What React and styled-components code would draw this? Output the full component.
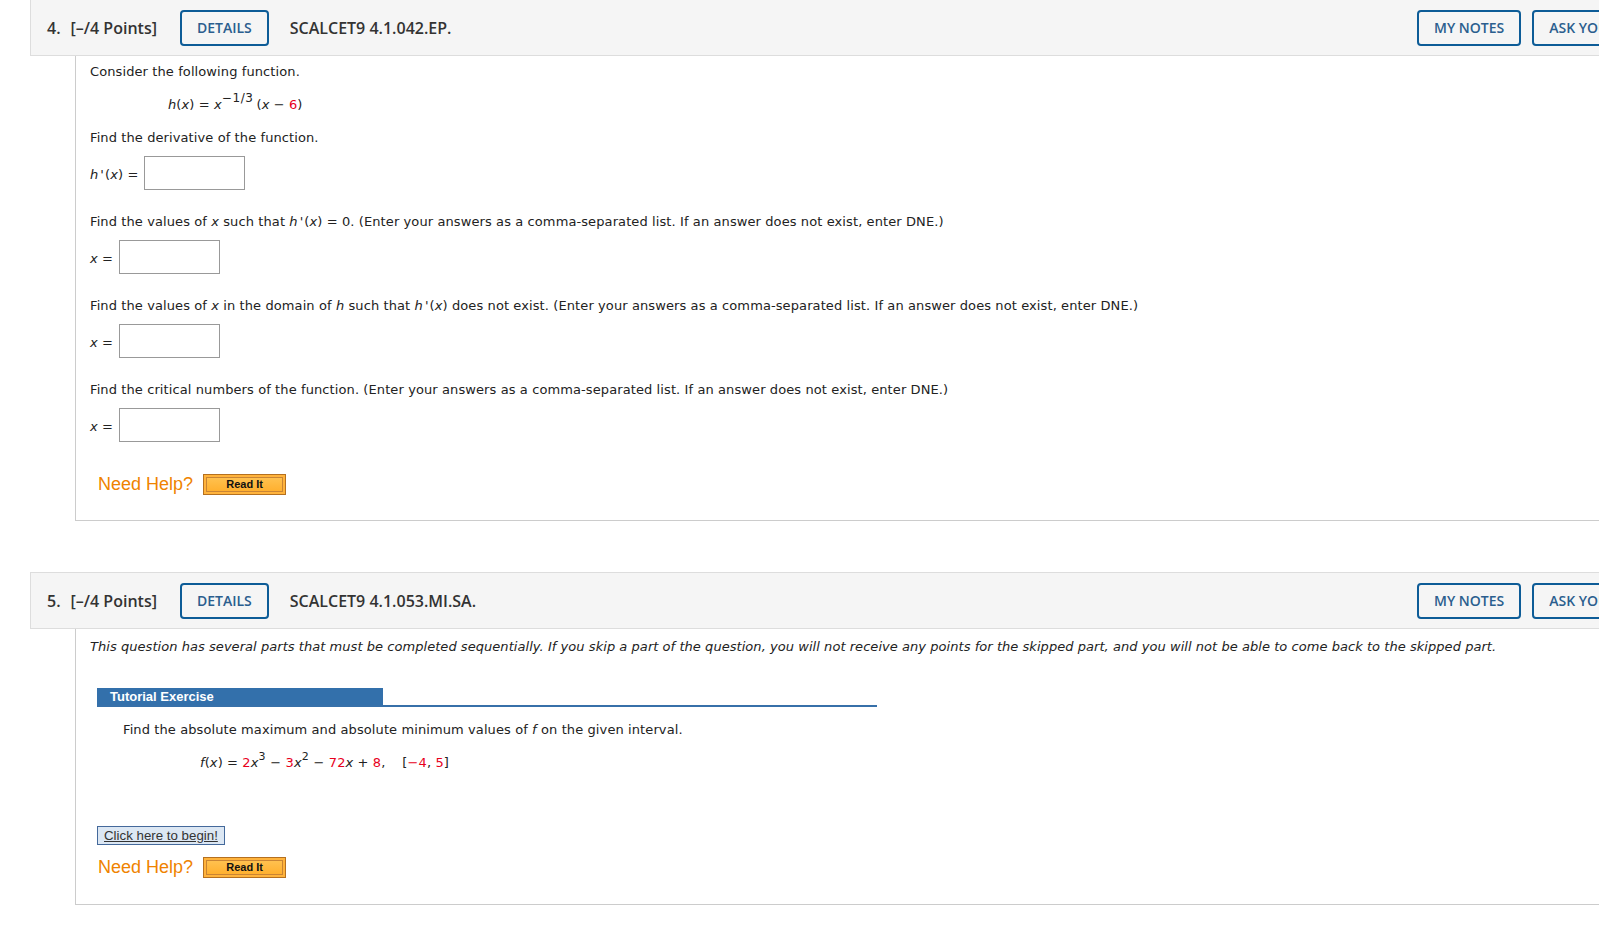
import React from 'react'
import styled, { createGlobalStyle } from 'styled-components'

const GlobalStyle = createGlobalStyle`
  html, body {
    margin: 0;
    padding: 0;
    background: #fff;
    overflow-x: hidden;
  }
  body {
    font-family: "DejaVu Sans", Verdana, sans-serif;
    font-size: 13px;
    letter-spacing: 0.1px;
    color: #222;
  }
`

const Page = styled.div`
  width: 1900px;
  padding-left: 30px;
`

const Question = styled.section`
  margin-top: ${p => p.first ? '-1px' : '51px'};
`

const Header = styled.header`
  display: flex;
  align-items: center;
  height: 55px;
  background: #f5f5f5;
  border: 1px solid #ddd;
  padding-left: 16px;
  font-family: "Open Sans", "Noto Sans", sans-serif;
  font-size: 16px;
  font-weight: 600;
  letter-spacing: 0;
  color: #333;
`

const LeftGroup = styled.div`
  display: flex;
  align-items: center;
  width: 1370px;
`

const Num = styled.span`
  margin-right: 10px;
`

const Points = styled.span`
  margin-right: 23px;
`

const OutlineButton = styled.button`
  height: 36px;
  padding: 0 ${p => p.pad || 14}px;
  background: #fff0;
  border: 2px solid #0d5c97;
  border-radius: 4px;
  font-family: "Open Sans", "Noto Sans", sans-serif;
  font-size: 14px;
  font-weight: 600;
  color: #2b5e8e;
  cursor: pointer;
  white-space: nowrap;
`

const Code = styled.span`
  margin-left: 21px;
`

const RightGroup = styled.div`
  display: flex;
  align-items: center;
  gap: 11px;
`

const Body = styled.div`
  margin-left: 45px;
  border-left: 1px solid #ccc;
  border-bottom: 1px solid #ccc;
  padding: 5px 0 ${p => p.pb || 24}px 14px;
`

const Text = styled.p`
  margin: ${p => p.mt || 0}px 0 0;
  line-height: 20px;
  font-style: ${p => p.italic ? 'italic' : 'normal'};
  letter-spacing: ${p => p.italic ? '0.05px' : '0.1px'};
  padding-left: ${p => p.indent || 0}px;
  white-space: nowrap;
`

const I = styled.i`
  font-style: italic;
`

const Prime = styled.span`
  padding: 0 1px 0 2px;
`

const Red = styled.span`
  color: #e8001c;
`

const Sup = styled.sup`
  font-size: ${p => p.size || 11}px;
  letter-spacing: 0.6px;
  line-height: 0;
  vertical-align: 7px;
  margin-right: ${p => p.mr || 0}px;
`

const AnswerRow = styled.div`
  display: flex;
  align-items: center;
  gap: 6px;
  margin-top: 8px;
  margin-bottom: 22px;
`

const Label = styled.span`
  line-height: 20px;
  padding-top: 4px;
`

const AnswerBox = styled.input`
  box-sizing: border-box;
  width: ${p => p.w || 101}px;
  height: 34px;
  border: 1px solid #999;
  background: #fff;
  outline: none;
`

const HelpRow = styled.div`
  display: flex;
  align-items: center;
  gap: 10px;
  height: 24px;
  margin-top: ${p => p.mt || 0}px;
  padding-left: 8px;
`

const NeedHelp = styled.span`
  font-family: "Liberation Sans", Arial, sans-serif;
  font-size: 18px;
  letter-spacing: 0;
  color: #ef8300;
`

const ReadIt = styled.button`
  box-sizing: border-box;
  width: 83px;
  height: 21px;
  padding: 2px;
  border: 1px solid #b5701f;
  background: #ffb33c;
  cursor: pointer;
  display: flex;
`

const ReadItInner = styled.span`
  flex: 1;
  border: 1px solid #c98434;
  background: linear-gradient(#ffc14f, #ffb02f);
  font-family: "Liberation Sans", Arial, sans-serif;
  font-size: 11px;
  font-weight: 700;
  letter-spacing: 0;
  color: #111;
  line-height: 13px;
  text-align: center;
`

const Tutorial = styled.div`
  width: 780px;
  margin: 31px 0 0 7px;
  border-bottom: 2px solid #3770a9;
`

const TutorialTitle = styled.div`
  width: 273px;
  height: 17px;
  padding-left: 13px;
  background: #3370ab;
  color: #fff;
  font-family: "Liberation Sans", Arial, sans-serif;
  font-size: 13px;
  font-weight: 700;
  letter-spacing: 0;
  line-height: 18px;
`

const BeginButton = styled.button`
  display: block;
  box-sizing: border-box;
  height: 19px;
  margin: 53px 0 0 7px;
  padding: 0 6px;
  background: #dce7f3;
  border: 1px solid #44699b;
  font-family: "Liberation Sans", Arial, sans-serif;
  font-size: 13.3px;
  letter-spacing: 0;
  color: #333;
  text-decoration: underline;
  line-height: 16px;
  cursor: pointer;
`

const Help = ({ mt }) => (
  <HelpRow mt={mt}>
    <NeedHelp>Need Help?</NeedHelp>
    <ReadIt><ReadItInner>Read It</ReadItInner></ReadIt>
  </HelpRow>
)

const QuestionHeader = ({ num, code }) => (
  <Header>
    <LeftGroup>
      <Num>{num}.</Num>
      <Points>[–/4 Points]</Points>
      <OutlineButton pad={15}>DETAILS</OutlineButton>
      <Code>{code}</Code>
    </LeftGroup>
    <RightGroup>
      <OutlineButton pad={15}>MY NOTES</OutlineButton>
      <OutlineButton pad={15}>ASK YOUR TEACHER</OutlineButton>
      <OutlineButton pad={15}>PRACTICE ANOTHER</OutlineButton>
    </RightGroup>
  </Header>
)

const XEquals = () => (
  <AnswerRow>
    <Label><I>x</I> =</Label>
    <AnswerBox />
  </AnswerRow>
)

export default function App() {
  return (
    <Page>
      <GlobalStyle />
      <Question first>
        <QuestionHeader num={4} code="SCALCET9 4.1.042.EP." />
        <Body pb={24}>
          <Text mt={1}>Consider the following function.</Text>
          <Text mt={13} indent={78}>
            <I>h</I>(<I>x</I>) = <I>x</I><Sup size={12} mr={3}>−1/3</Sup>(<I>x</I> − <Red>6</Red>)
          </Text>
          <Text mt={13}>Find the derivative of the function.</Text>
          <AnswerRow>
            <Label><I>h</I><Prime>'</Prime>(<I>x</I>) =</Label>
            <AnswerBox w={101} />
          </AnswerRow>
          <Text>Find the values of <I>x</I> such that <I>h</I><Prime>'</Prime>(<I>x</I>) = 0. (Enter your answers as a comma-separated list. If an answer does not exist, enter DNE.)</Text>
          <XEquals />
          <Text>Find the values of <I>x</I> in the domain of <I>h</I> such that <I>h</I><Prime>'</Prime>(<I>x</I>) does not exist. (Enter your answers as a comma-separated list. If an answer does not exist, enter DNE.)</Text>
          <XEquals />
          <Text>Find the critical numbers of the function. (Enter your answers as a comma-separated list. If an answer does not exist, enter DNE.)</Text>
          <XEquals />
          <Help mt={30} />
        </Body>
      </Question>

      <Question>
        <QuestionHeader num={5} code="SCALCET9 4.1.053.MI.SA." />
        <Body pb={25}>
          <Text italic mt={3}>This question has several parts that must be completed sequentially. If you skip a part of the question, you will not receive any points for the skipped part, and you will not be able to come back to the skipped part.</Text>
          <Tutorial>
            <TutorialTitle>Tutorial Exercise</TutorialTitle>
          </Tutorial>
          <Text mt={13} indent={33}>Find the absolute maximum and absolute minimum values of <I>f</I> on the given interval.</Text>
          <Text mt={13} indent={110}>
            <I>f</I>(<I>x</I>) = <Red>2</Red><I>x</I><Sup>3</Sup> − <Red>3</Red><I>x</I><Sup>2</Sup> − <Red>72</Red><I>x</I> + <Red>8</Red>,&nbsp;&nbsp;&nbsp; [<Red>−4</Red>, <Red>5</Red>]
          </Text>
          <BeginButton>Click here to begin!</BeginButton>
          <Help mt={10} />
        </Body>
      </Question>
    </Page>
  )
}
